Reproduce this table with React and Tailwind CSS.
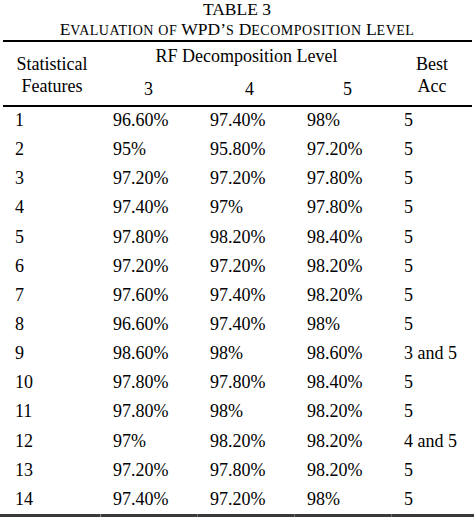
import React from 'react';

const rows = [
  ['1', '96.60%', '97.40%', '98%', '5'],
  ['2', '95%', '95.80%', '97.20%', '5'],
  ['3', '97.20%', '97.20%', '97.80%', '5'],
  ['4', '97.40%', '97%', '97.80%', '5'],
  ['5', '97.80%', '98.20%', '98.40%', '5'],
  ['6', '97.20%', '97.20%', '98.20%', '5'],
  ['7', '97.60%', '97.40%', '98.20%', '5'],
  ['8', '96.60%', '97.40%', '98%', '5'],
  ['9', '98.60%', '98%', '98.60%', '3 and 5'],
  ['10', '97.80%', '97.80%', '98.40%', '5'],
  ['11', '97.80%', '98%', '98.20%', '5'],
  ['12', '97%', '98.20%', '98.20%', '4 and 5'],
  ['13', '97.20%', '97.80%', '98.20%', '5'],
  ['14', '97.40%', '97.20%', '98%', '5'],
];

// small caps by hand: lowercase letters drawn as smaller capitals
const SmallCaps = ({ text }) => {
  const parts = [];
  let buf = '';
  let small = null;
  for (const ch of text) {
    const isSmall = ch !== ch.toUpperCase();
    if (small !== null && isSmall !== small) {
      parts.push({ small, t: buf });
      buf = '';
    }
    small = isSmall;
    buf += ch;
  }
  if (buf) parts.push({ small, t: buf });
  return parts.map((p, i) =>
    p.small ? (
      <span key={i} className="text-[14px] uppercase tracking-[0.5px]">{p.t}</span>
    ) : (
      <span key={i}>{p.t}</span>
    )
  );
};

const App = () => {
  return (
    <div className="w-[474px] h-[518px] bg-white text-black overflow-hidden font-['Liberation_Serif','Times_New_Roman',serif]">
      {/* caption */}
      <div className="text-center text-[17.5px] leading-[19.5px]">
        <div>TABLE 3</div>
        <div className="whitespace-nowrap">
          <SmallCaps text="Evaluation of WPD’s Decomposition Level" />
        </div>
      </div>

      <div className="ml-[3px] mr-[2px] border-t-2 border-black">
        {/* header */}
        <div className="flex h-[65px] text-[18px] leading-[22px] border-b-2 border-black">
          <div className="w-[98px] pt-[11px] text-center">
            <div>Statistical</div>
            <div>Features</div>
          </div>
          <div className="w-[291px] pt-[3px]">
            <div className="text-center">RF Decomposition Level</div>
            <div className="grid grid-cols-3 mt-[11px]">
              <div className="pl-[43px]">3</div>
              <div className="pl-[47px]">4</div>
              <div className="pl-[48px]">5</div>
            </div>
          </div>
          <div className="flex-1 pt-[11px] text-center">
            <div>Best</div>
            <div>Acc</div>
          </div>
        </div>

        {/* body */}
        <div className="text-[18px] leading-[27px]">
          {rows.map((r) => (
            <div key={r[0]} className="grid grid-cols-[98px_97px_97px_97px_1fr] h-[29.15px]">
              {r.map((c, i) => (
                <div key={i} className="pl-[12px] whitespace-nowrap">{c}</div>
              ))}
            </div>
          ))}
        </div>
      </div>

      <div className="grid grid-cols-[101px_97px_97px_97px_1fr] h-[3px] mt-[-1px] bg-[#3a3a3a]">
        <div className="border-r border-[#8a8a8a]" />
        <div className="border-r border-[#6a6a6a]" />
        <div className="border-r border-[#6a6a6a]" />
        <div className="border-r border-[#6a6a6a]" />
        <div />
      </div>
    </div>
  );
};

export default App;
